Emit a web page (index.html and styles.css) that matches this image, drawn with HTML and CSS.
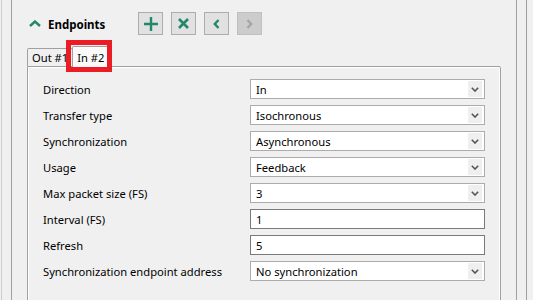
FILE: index.html
```html
<!DOCTYPE html>
<html>
<head>
<meta charset="utf-8">
<link rel="stylesheet" href="styles.css">
</head>
<body>
<div class="pane">
  <div class="frame">
    <div class="inner">
      <div class="header">
        <svg class="collapse" width="12" height="7" viewBox="0 0 12 7"><polyline points="1,6 6,1.5 11,6" fill="none" stroke="#23876a" stroke-width="2.4"/></svg>
        <span class="title">Endpoints</span>
        <div class="tools">
          <button class="tool"><svg width="14" height="14" viewBox="0 0 14 14"><path d="M7 0V14M0 7H14" stroke="#23876a" stroke-width="2.4"/></svg></button>
          <button class="tool"><svg width="11" height="11" viewBox="0 0 11 11"><path d="M1 1L10 10M10 1L1 10" stroke="#23876a" stroke-width="2.6"/></svg></button>
          <button class="tool"><svg width="7" height="10" viewBox="0 0 7 10"><polyline points="5.5,1 1.8,5 5.5,9" fill="none" stroke="#23876a" stroke-width="2.4"/></svg></button>
          <button class="tool disabled"><svg width="7" height="10" viewBox="0 0 7 10"><polyline points="1.5,1 5.2,5 1.5,9" fill="none" stroke="#a6a6a6" stroke-width="2.4"/></svg></button>
        </div>
      </div>
      <div class="tabs">
        <div class="tab">Out #1</div>
        <div class="tab active">In #2</div>
        <div class="highlight"></div>
      </div>
      <div class="panel">
        <div class="form">
          <div class="label">Direction</div>
          <div class="select"><span>In</span><span class="arrow"><svg width="8" height="5" viewBox="0 0 8 5"><polyline points="0.8,0.8 4,4 7.2,0.8" fill="none" stroke="#555" stroke-width="1.6"/></svg></span></div>
          <div class="label">Transfer type</div>
          <div class="select"><span>Isochronous</span><span class="arrow"><svg width="8" height="5" viewBox="0 0 8 5"><polyline points="0.8,0.8 4,4 7.2,0.8" fill="none" stroke="#555" stroke-width="1.6"/></svg></span></div>
          <div class="label">Synchronization</div>
          <div class="select"><span>Asynchronous</span><span class="arrow"><svg width="8" height="5" viewBox="0 0 8 5"><polyline points="0.8,0.8 4,4 7.2,0.8" fill="none" stroke="#555" stroke-width="1.6"/></svg></span></div>
          <div class="label">Usage</div>
          <div class="select"><span>Feedback</span><span class="arrow"><svg width="8" height="5" viewBox="0 0 8 5"><polyline points="0.8,0.8 4,4 7.2,0.8" fill="none" stroke="#555" stroke-width="1.6"/></svg></span></div>
          <div class="label">Max packet size (FS)</div>
          <div class="select"><span>3</span><span class="arrow"><svg width="8" height="5" viewBox="0 0 8 5"><polyline points="0.8,0.8 4,4 7.2,0.8" fill="none" stroke="#555" stroke-width="1.6"/></svg></span></div>
          <div class="label">Interval (FS)</div>
          <div class="input"><span>1</span></div>
          <div class="label">Refresh</div>
          <div class="input"><span>5</span></div>
          <div class="label">Synchronization endpoint address</div>
          <div class="select"><span>No synchronization</span><span class="arrow"><svg width="8" height="5" viewBox="0 0 8 5"><polyline points="0.8,0.8 4,4 7.2,0.8" fill="none" stroke="#555" stroke-width="1.6"/></svg></span></div>
        </div>
      </div>
    </div>
  </div>
</div>
</body>
</html>
```
FILE: styles.css
```css
html, body {
  margin: 0;
  height: 300px;
  overflow: hidden;
  background: #f0f0f0;
  font-family: "Noto Sans", "Segoe UI", sans-serif;
  font-size: 11.2px;
  color: #000;
}
.pane {
  margin-left: 1px;
  border-left: 1px solid #cdcdcd;
  padding-left: 9px;
  height: 300px;
}
.frame {
  width: 514px;
  height: 300px;
  border-left: 1px solid #a0a0a0;
  border-right: 1px solid #a0a0a0;
}
.inner {
  box-sizing: border-box;
  width: 505px;
  height: 300px;
  border-right: 1px solid #a0a0a0;
  padding: 12px 15px 0 15px;
}
.header {
  display: flex;
  align-items: center;
  height: 23px;
}
.collapse {
  margin-left: 2px;
  flex: none;
}
.title {
  margin-left: 7px;
  width: 90px;
  font-weight: bold;
  font-size: 11.5px;
  padding-top: 1px;
}
.tools {
  display: flex;
  gap: 8px;
}
.tool {
  box-sizing: border-box;
  width: 25px;
  height: 23px;
  margin: 0;
  padding: 0;
  border: 1px solid #adadad;
  background: #e1e1e1;
  display: flex;
  align-items: center;
  justify-content: center;
}
.tool.disabled {
  background: #cccccc;
  border-color: #bfbfbf;
}
.tabs {
  position: relative;
  display: flex;
  align-items: flex-end;
  height: 20px;
  margin-top: 11px;
}
.tab {
  box-sizing: border-box;
  height: 18px;
  border: 1px solid #a0a0a0;
  border-bottom: 0;
  border-radius: 2px 2px 0 0;
  padding: 1px 4px 0 4px;
  line-height: 16px;
  white-space: nowrap;
}
.tab.active {
  position: relative;
  z-index: 1;
  height: 21px;
  margin-bottom: -1px;
  margin-left: -1px;
  padding: 3px 4px 0 4px;
  background: #fafafa;
}
.highlight {
  position: absolute;
  left: 39px;
  top: -6px;
  width: 46px;
  height: 32px;
  box-sizing: border-box;
  border: 5px solid #ec1c24;
  z-index: 2;
}
.panel {
  box-sizing: border-box;
  height: 300px;
  border: 1px solid #a0a0a0;
  border-radius: 0 2px 0 0;
  box-shadow: inset 1px 1px 0 #fff, inset -1px 0 0 #fff;
  padding: 12px 15px 0 15px;
}
.form {
  display: grid;
  grid-template-columns: 207px 235px;
  grid-auto-rows: 20px;
  row-gap: 6px;
  align-items: center;
}
.label {
  box-sizing: border-box;
  height: 20px;
  padding-top: 1px;
  line-height: 20px;
  white-space: nowrap;
}
.select, .input {
  box-sizing: border-box;
  height: 20px;
  display: flex;
  align-items: center;
  padding-left: 5px;
  background: #fff;
  border: 1px solid #acacac;
}
.select > span:first-child, .input > span {
  padding-top: 1px;
}
.input {
  border-color: #7a7a7a;
}
.arrow {
  margin-left: auto;
  margin-right: 2px;
  width: 14px;
  height: 16px;
  background: #efefef;
  display: flex;
  align-items: center;
  justify-content: center;
}
```
